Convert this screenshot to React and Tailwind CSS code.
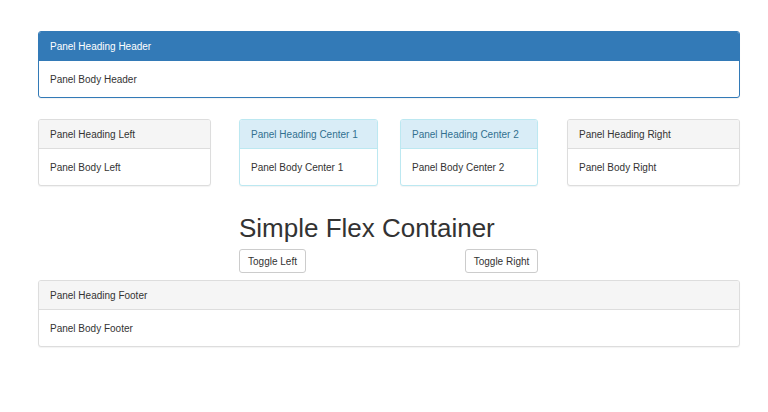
import React from 'react';

const font = { fontFamily: '"Liberation Sans", Arial, sans-serif' };

function Panel({ heading, body, variant = 'default', className = '' }) {
  const styles = {
    default: {
      wrap: 'border-[#ddd]',
      head: 'bg-[#f5f5f5] text-[#333] border-[#ddd]',
    },
    primary: {
      wrap: 'border-[#337ab7]',
      head: 'bg-[#337ab7] text-white border-[#337ab7]',
    },
    info: {
      wrap: 'border-[#bce8f1]',
      head: 'bg-[#d9edf7] text-[#31708f] border-[#bce8f1]',
    },
  }[variant];

  return (
    <div className={`bg-white border rounded-[3px] shadow-[0_1px_1px_rgba(0,0,0,0.05)] ${styles.wrap} ${className}`}>
      <div className={`h-[29px] px-[11px] flex items-center border-b rounded-t-[2px] text-[10px] ${styles.head}`}>
        {heading}
      </div>
      <div className="h-[36px] px-[11px] flex items-center text-[10px] text-[#333]">
        {body}
      </div>
    </div>
  );
}

export default function App() {
  return (
    <div className="w-[768px] h-[412px] bg-white pt-[31px] pl-[38px] pr-[28px]" style={font}>
      <Panel variant="primary" heading="Panel Heading Header" body="Panel Body Header" />

      <div className="flex mt-[21px]">
        <Panel className="w-[173px]" heading="Panel Heading Left" body="Panel Body Left" />
        <div className="w-[299px] ml-[28px] flex justify-between">
          <Panel className="w-[139px]" variant="info" heading="Panel Heading Center 1" body="Panel Body Center 1" />
          <Panel className="w-[138px]" variant="info" heading="Panel Heading Center 2" body="Panel Body Center 2" />
        </div>
        <Panel className="w-[173px] ml-[29px]" heading="Panel Heading Right" body="Panel Body Right" />
      </div>

      <div className="w-[299px] ml-[201px] mt-[27px]">
        <h1 className="text-[26px] leading-[30px] text-[#333] m-0">Simple Flex Container</h1>
        <div className="flex justify-between mt-[6px]">
          <button type="button" className="h-[24px] w-[67px] border border-[#ccc] rounded-[3px] bg-white text-[10px] text-[#333]">
            Toggle Left
          </button>
          <button type="button" className="h-[24px] w-[73px] border border-[#ccc] rounded-[3px] bg-white text-[10px] text-[#333]">
            Toggle Right
          </button>
        </div>
      </div>

      <Panel className="mt-[7px]" heading="Panel Heading Footer" body="Panel Body Footer" />
    </div>
  );
}
